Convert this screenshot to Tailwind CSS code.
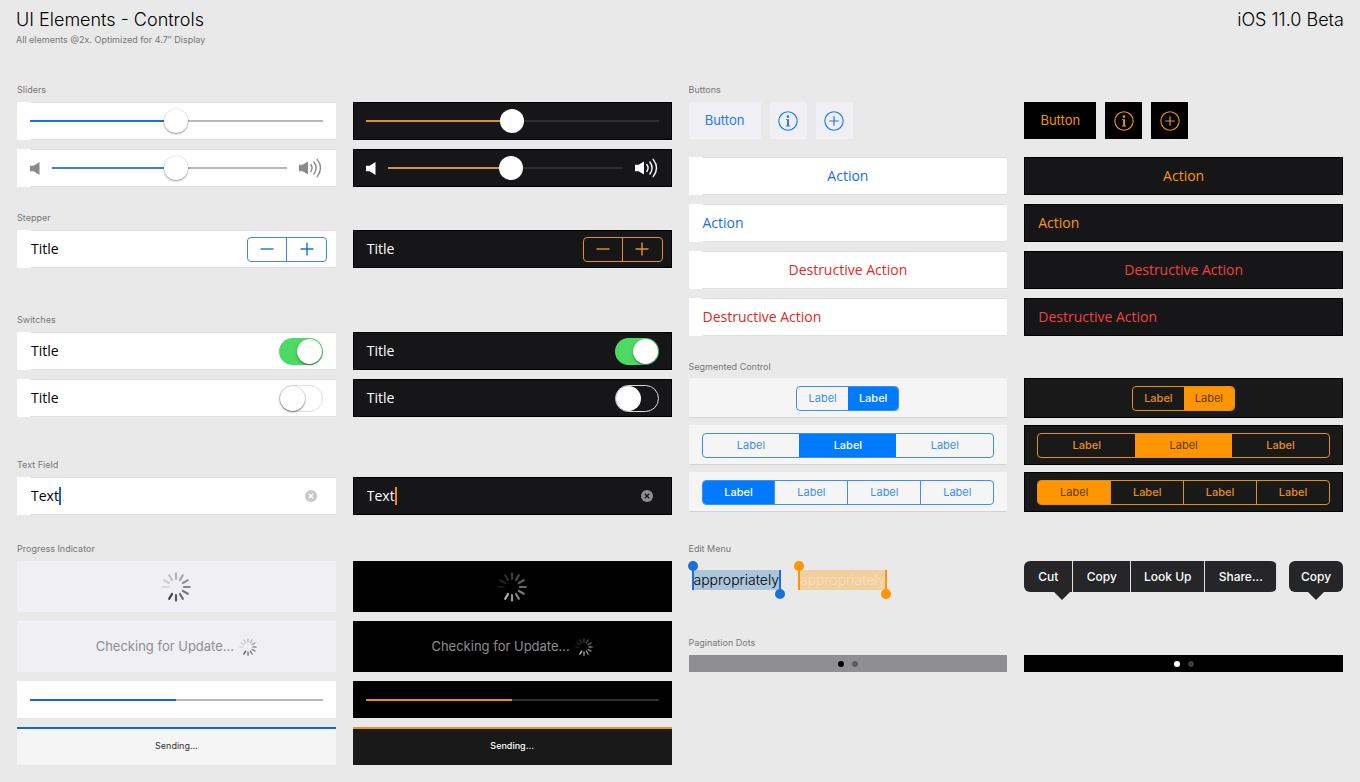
<!DOCTYPE html>
<html lang="en">
	<head>
		<meta charset="UTF-8" />
		<meta name="viewport" content="width=device-width, initial-scale=1.0" />
		<title>UI Elements - Controls</title>
		<script src="https://cdn.jsdelivr.net/npm/@tailwindcss/browser@4"></script>
	</head>
	<body class="bg-[#e9e9e9] text-black font-['Inter',sans-serif] min-h-screen">
		<!-- shared icons -->
		<svg class="hidden">
			<symbol id="speaker" viewBox="0 0 10 13">
				<path d="M0 3.7h3.6L9.5 0v13L3.6 9.3H0z" fill="currentColor" />
			</symbol>
			<symbol id="speaker-loud" viewBox="0 0 24 20">
				<path d="M0 6.7h3.6L9 3.5v13l-5.4-3.2H0z" fill="currentColor" />
				<g fill="none" stroke="currentColor" stroke-width="1.4" stroke-linecap="round">
					<path d="M11.8 6.5q2.6 3.5 0 7" />
					<path d="M14.9 4q4.4 6 0 12" />
					<path d="M18.2 1.4q6.6 8.6 0 17.2" />
				</g>
			</symbol>
			<symbol id="minus" viewBox="0 0 14 14">
				<path d="M.5 7h13" stroke="currentColor" stroke-width="1.4" />
			</symbol>
			<symbol id="plus" viewBox="0 0 14 14">
				<path d="M.5 7h13M7 .5v13" stroke="currentColor" stroke-width="1.4" />
			</symbol>
			<symbol id="info" viewBox="0 0 20 20">
				<circle cx="10" cy="10" r="9.2" fill="none" stroke="currentColor" stroke-width="1.1" />
				<circle cx="9.9" cy="5.6" r="1.3" fill="currentColor" />
				<path d="M8 8.2h3v6.4h1.2v.8H7.9v-.8h1.2V9H8z" fill="currentColor" />
			</symbol>
			<symbol id="add" viewBox="0 0 20 20">
				<circle cx="10" cy="10" r="9.2" fill="none" stroke="currentColor" stroke-width="1.1" />
				<path d="M5.2 10h9.6M10 5.2v9.6" stroke="currentColor" stroke-width="1.2" />
			</symbol>
			<symbol id="clear" viewBox="0 0 12 12">
				<circle cx="6" cy="6" r="6" fill="currentColor" />
				<path d="M3.8 3.8l4.4 4.4M8.2 3.8L3.8 8.2" stroke="var(--cross)" stroke-width="1.3" />
			</symbol>
			<symbol id="spinner" viewBox="-15 -15 30 30">
				<g stroke="currentColor" stroke-width="2.2" stroke-linecap="round">
					<path d="M0-8v-5.6" opacity=".32" />
					<path d="M0-8v-5.6" opacity=".4" transform="rotate(30)" />
					<path d="M0-8v-5.6" opacity=".5" transform="rotate(60)" />
					<path d="M0-8v-5.6" opacity=".6" transform="rotate(90)" />
					<path d="M0-8v-5.6" opacity=".66" transform="rotate(120)" />
					<path d="M0-8v-5.6" opacity=".74" transform="rotate(150)" />
					<path d="M0-8v-5.6" opacity=".84" transform="rotate(180)" />
					<path d="M0-8v-5.6" transform="rotate(210)" />
					<path d="M0-8v-5.6" opacity=".12" transform="rotate(270)" />
					<path d="M0-8v-5.6" opacity=".18" transform="rotate(300)" />
					<path d="M0-8v-5.6" opacity=".25" transform="rotate(330)" />
				</g>
			</symbol>
			<symbol id="arrow" viewBox="0 0 16 8">
				<path d="M0 0h16L8 8z" fill="currentColor" />
			</symbol>
		</svg>

		<header class="px-4 pt-2 flex justify-between font-light text-lg leading-6">
			<div>
				<h1>UI Elements - Controls</h1>
				<p class="mt-[2px] text-[9px] leading-3 font-normal text-[#777777]">All elements @2x. Optimized for 4.7″ Display</p>
			</div>
			<p>iOS 11.0 Beta</p>
		</header>

		<main class="mt-[38px] px-[17px] pb-4 grid grid-cols-2 gap-[17px]">
			<div>
				<!-- Sliders -->
				<section>
					<h2 class="h-[18px] text-[9px] leading-3 text-[#777777]">Sliders</h2>
					<div class="grid grid-cols-2 gap-x-[17px] gap-y-[9px]">
						<div class="h-[38px] bg-white pl-[13px]">
							<div class="h-full flex items-center pr-[13px] border-y border-[#e0e0e3]">
								<input type="range" value="50" aria-label="Slider" class="w-full h-[2px] appearance-none bg-linear-to-r from-[#1472dd] from-50% to-[#b7b7b7] to-50% [&::-webkit-slider-thumb]:appearance-none [&::-webkit-slider-thumb]:size-6 [&::-webkit-slider-thumb]:rounded-full [&::-webkit-slider-thumb]:bg-white [&::-webkit-slider-thumb]:shadow-[0_1px_2px_#00000066,0_0_1px_#00000040]" />
							</div>
						</div>
						<div class="h-[38px] bg-[#161618] border border-black px-3 flex items-center">
							<input type="range" value="50" aria-label="Slider" class="w-full h-[2px] appearance-none bg-linear-to-r from-[#e58e1c] from-50% to-[#2e2e30] to-50% [&::-webkit-slider-thumb]:appearance-none [&::-webkit-slider-thumb]:size-6 [&::-webkit-slider-thumb]:rounded-full [&::-webkit-slider-thumb]:bg-white" />
						</div>
						<div class="h-[38px] bg-white pl-[13px]">
							<div class="h-full flex items-center gap-3 pr-[13px] border-y border-[#e0e0e3] text-[#8a8a8e]">
								<svg class="w-[10px] h-[13px] shrink-0"><use href="#speaker" /></svg>
								<input type="range" value="53" aria-label="Volume" class="min-w-0 flex-1 h-[2px] appearance-none bg-linear-to-r from-[#3d83d0] from-53% to-[#b7b7b7] to-53% [&::-webkit-slider-thumb]:appearance-none [&::-webkit-slider-thumb]:size-6 [&::-webkit-slider-thumb]:rounded-full [&::-webkit-slider-thumb]:bg-white [&::-webkit-slider-thumb]:shadow-[0_1px_2px_#00000066,0_0_1px_#00000040]" />
								<svg class="w-6 h-5 shrink-0"><use href="#speaker-loud" /></svg>
							</div>
						</div>
						<div class="h-[38px] bg-[#161618] border border-black px-3 flex items-center gap-3 text-white">
							<svg class="w-[10px] h-[13px] shrink-0"><use href="#speaker" /></svg>
							<input type="range" value="53" aria-label="Volume" class="min-w-0 flex-1 h-[2px] appearance-none bg-linear-to-r from-[#dc9238] from-53% to-[#2e2e30] to-53% [&::-webkit-slider-thumb]:appearance-none [&::-webkit-slider-thumb]:size-6 [&::-webkit-slider-thumb]:rounded-full [&::-webkit-slider-thumb]:bg-white" />
							<svg class="w-6 h-5 shrink-0"><use href="#speaker-loud" /></svg>
						</div>
					</div>
				</section>

				<!-- Stepper -->
				<section class="mt-[25px]">
					<h2 class="h-[18px] text-[9px] leading-3 text-[#777777]">Stepper</h2>
					<div class="grid grid-cols-2 gap-x-[17px]">
						<div class="h-[38px] bg-white pl-[13px]">
							<div class="h-full flex items-center justify-between pl-px pr-[9px] border-y border-[#e0e0e3]">
								<span class="font-['Open_Sans',sans-serif] text-sm">Title</span>
								<div class="w-20 h-[25px] flex rounded-sm border border-[#3f88dd] divide-x divide-[#3f88dd] text-[#1472dd]">
									<button aria-label="Decrease" class="flex-1 flex items-center justify-center"><svg class="size-[14px]"><use href="#minus" /></svg></button>
									<button aria-label="Increase" class="flex-1 flex items-center justify-center"><svg class="size-[14px]"><use href="#plus" /></svg></button>
								</div>
							</div>
						</div>
						<div class="h-[38px] bg-[#161618] border border-black pl-[13px] pr-2 flex items-center justify-between">
							<span class="font-['Open_Sans',sans-serif] text-sm text-white">Title</span>
							<div class="w-20 h-[25px] flex rounded-sm border border-[#e58e1c] divide-x divide-[#e58e1c] text-[#ee9219]">
								<button aria-label="Decrease" class="flex-1 flex items-center justify-center"><svg class="size-[14px]"><use href="#minus" /></svg></button>
								<button aria-label="Increase" class="flex-1 flex items-center justify-center"><svg class="size-[14px]"><use href="#plus" /></svg></button>
							</div>
						</div>
					</div>
				</section>

				<!-- Switches -->
				<section class="mt-[46px]">
					<h2 class="h-[18px] text-[9px] leading-3 text-[#777777]">Switches</h2>
					<div class="grid grid-cols-2 gap-x-[17px] gap-y-[9px]">
						<div class="h-[38px] bg-white pl-[13px]">
							<label class="h-full flex items-center justify-between pl-px pr-[13px] border-y border-[#e0e0e3] font-['Open_Sans',sans-serif] text-sm">
								Title
								<input type="checkbox" checked class="appearance-none w-11 h-[27px] p-px rounded-full flex justify-end bg-[#4cd964] before:size-[25px] before:rounded-full before:bg-white before:shadow-[0_1px_2px_#00000080]" />
							</label>
						</div>
						<div class="h-[38px] bg-[#161618] border border-black pl-[13px] pr-3">
							<label class="h-full flex items-center justify-between font-['Open_Sans',sans-serif] text-sm text-white">
								Title
								<input type="checkbox" checked class="appearance-none w-11 h-[27px] p-px rounded-full flex justify-end bg-[#4cd964] before:size-[25px] before:rounded-full before:bg-white before:shadow-[0_1px_2px_#00000080]" />
							</label>
						</div>
						<div class="h-[38px] bg-white pl-[13px]">
							<label class="h-full flex items-center justify-between pl-px pr-[13px] border-y border-[#e0e0e3] font-['Open_Sans',sans-serif] text-sm">
								Title
								<input type="checkbox" class="appearance-none w-11 h-[27px] rounded-full flex border border-[#dddddd] before:size-[25px] before:rounded-full before:bg-white before:shadow-[0_1px_2px_#00000080,0_0_1px_#00000040]" />
							</label>
						</div>
						<div class="h-[38px] bg-[#161618] border border-black pl-[13px] pr-3">
							<label class="h-full flex items-center justify-between font-['Open_Sans',sans-serif] text-sm text-white">
								Title
								<input type="checkbox" class="appearance-none w-11 h-[27px] rounded-full flex border border-[#dddddd] before:size-[25px] before:rounded-full before:bg-white" />
							</label>
						</div>
					</div>
				</section>

				<!-- Text field -->
				<section class="mt-[42px]">
					<h2 class="h-[18px] text-[9px] leading-3 text-[#777777]">Text Field</h2>
					<div class="grid grid-cols-2 gap-x-[17px]">
						<div class="h-[38px] bg-white pl-[13px]">
							<div class="h-full flex items-center pl-px pr-[19px] border-y border-[#e0e0e3]">
								<input type="text" value="Text" aria-label="Text" class="field-sizing-content font-['Open_Sans',sans-serif] text-sm" />
								<span class="w-[2px] h-[18px] bg-[#1a5fd0]"></span>
								<button aria-label="Clear" class="ml-auto text-[#c7c7cc] [--cross:white]"><svg class="size-3"><use href="#clear" /></svg></button>
							</div>
						</div>
						<div class="h-[38px] bg-[#161618] border border-black pl-[13px] pr-[18px] flex items-center">
							<input type="text" value="Text" aria-label="Text" class="field-sizing-content font-['Open_Sans',sans-serif] text-sm text-white" />
							<span class="w-[2px] h-[18px] bg-[#f08c0c]"></span>
							<button aria-label="Clear" class="ml-auto text-[#8e8e93] [--cross:#161618]"><svg class="size-3"><use href="#clear" /></svg></button>
						</div>
					</div>
				</section>

				<!-- Progress -->
				<section class="mt-7">
					<h2 class="h-[18px] text-[9px] leading-3 text-[#777777]">Progress Indicator</h2>
					<div class="grid grid-cols-2 gap-x-[17px] gap-y-[9px]">
						<div class="h-[51px] bg-[#efeff4] flex items-center justify-center text-[#3c3c4c]">
							<svg class="size-[30px]"><use href="#spinner" /></svg>
						</div>
						<div class="h-[51px] bg-black flex items-center justify-center text-[#b4b4b4]">
							<svg class="size-[30px]"><use href="#spinner" /></svg>
						</div>
						<div class="h-[51px] bg-[#efeff4] flex items-center justify-center gap-[5px] text-[13px] text-[#8e8e93]">
							Checking for Update...
							<svg class="size-[18px] text-[#55555c]"><use href="#spinner" /></svg>
						</div>
						<div class="h-[51px] bg-black flex items-center justify-center gap-[5px] text-[13px] text-[#8e8e93]">
							Checking for Update...
							<svg class="size-[18px] text-[#c4c4c4]"><use href="#spinner" /></svg>
						</div>
						<div class="h-[37px] bg-white px-[13px] flex items-center">
							<progress value="50" max="100" aria-label="Progress" class="w-full h-[2px] appearance-none [&::-webkit-progress-bar]:bg-[#b7b7b7] [&::-webkit-progress-value]:bg-[#1566d0]"></progress>
						</div>
						<div class="h-[37px] bg-black px-[13px] flex items-center">
							<progress value="50" max="100" aria-label="Progress" class="w-full h-[2px] appearance-none [&::-webkit-progress-bar]:bg-[#2e2e30] [&::-webkit-progress-value]:bg-[#e58e1c]"></progress>
						</div>
						<div class="h-[38px] bg-[#f5f5f5] border-t-2 border-[#1566d0] pb-[2px] flex items-center justify-center text-[9px] text-[#333333]">Sending...</div>
						<div class="h-[38px] bg-[#191919] border-t-2 border-[#ee921c] pb-[2px] flex items-center justify-center text-[9px] font-medium text-white">Sending...</div>
					</div>
				</section>
			</div>

			<div>
				<!-- Buttons -->
				<section>
					<h2 class="h-[18px] text-[9px] leading-3 text-[#777777]">Buttons</h2>
					<div class="grid grid-cols-2 gap-x-[17px]">
						<div class="flex gap-[9px] text-[#1f7ce2] text-[13px]">
							<button class="w-[72px] h-[37px] pt-px bg-[#efeff4]">Button</button>
							<button aria-label="Info" class="size-[37px] bg-[#efeff4] flex items-center justify-center"><svg class="size-5"><use href="#info" /></svg></button>
							<button aria-label="Add" class="size-[37px] bg-[#efeff4] flex items-center justify-center"><svg class="size-5"><use href="#add" /></svg></button>
						</div>
						<div class="flex gap-[9px] text-[#ee9219] text-[13px]">
							<button class="w-[72px] h-[37px] pt-px bg-black">Button</button>
							<button aria-label="Info" class="size-[37px] bg-black flex items-center justify-center"><svg class="size-5"><use href="#info" /></svg></button>
							<button aria-label="Add" class="size-[37px] bg-black flex items-center justify-center"><svg class="size-5"><use href="#add" /></svg></button>
						</div>
					</div>
					<div class="mt-[18px] grid grid-cols-2 gap-x-[17px] gap-y-[9px] font-['Open_Sans',sans-serif] text-sm">
						<div class="h-[38px] bg-white pl-[13px]">
							<button class="w-full h-full pr-[13px] border-y border-[#e0e0e3] text-[#1472dd]">Action</button>
						</div>
						<button class="h-[38px] bg-[#161618] border border-black text-[#fb960f]">Action</button>
						<div class="h-[38px] bg-white pl-[13px]">
							<button class="w-full h-full pl-px text-left border-y border-[#e0e0e3] text-[#1472dd]">Action</button>
						</div>
						<button class="h-[38px] bg-[#161618] border border-black pl-[13px] text-left text-[#fb960f]">Action</button>
						<div class="h-[38px] bg-white pl-[13px]">
							<button class="w-full h-full pr-[13px] border-y border-[#e0e0e3] text-[#dd2a24]">Destructive Action</button>
						</div>
						<button class="h-[38px] bg-[#161618] border border-black text-[#f2413a]">Destructive Action</button>
						<div class="h-[38px] bg-white pl-[13px]">
							<button class="w-full h-full pl-px text-left border-y border-[#e0e0e3] text-[#dd2a24]">Destructive Action</button>
						</div>
						<button class="h-[38px] bg-[#161618] border border-black pl-[13px] text-left text-[#f2413a]">Destructive Action</button>
					</div>
				</section>

				<!-- Segmented control -->
				<section class="mt-[25px]">
					<h2 class="h-[17px] text-[9px] leading-3 text-[#777777]">Segmented Control</h2>
					<div class="grid grid-cols-2 gap-x-[17px] gap-y-[7px] text-[11px]">
						<div class="h-10 bg-[#f5f5f5] border-b border-[#d4d4d4] pt-px px-[13px] flex items-center justify-center">
							<div class="w-[103px] h-[25px] flex rounded-sm overflow-hidden border border-[#3f8fe8] text-[#3f8fe8]">
								<button class="flex-1">Label</button>
								<button aria-pressed="true" class="flex-1 bg-[#007aff] text-white font-medium">Label</button>
							</div>
						</div>
						<div class="h-10 bg-[#191919] border border-black px-3 flex items-center justify-center">
							<div class="w-[103px] h-[25px] flex rounded-sm overflow-hidden border border-[#e58e1c] text-[#e58e1c]">
								<button class="flex-1 font-medium">Label</button>
								<button aria-pressed="true" class="flex-1 bg-[#ff9500] text-[#5c3a08]">Label</button>
							</div>
						</div>
						<div class="h-10 bg-[#f5f5f5] border-b border-[#d4d4d4] pt-px px-[13px] flex items-center">
							<div class="w-full h-[25px] flex rounded-sm overflow-hidden border border-[#3f8fe8] text-[#3f8fe8]">
								<button class="flex-1">Label</button>
								<button aria-pressed="true" class="flex-1 bg-[#007aff] text-white font-medium">Label</button>
								<button class="flex-1">Label</button>
							</div>
						</div>
						<div class="h-10 bg-[#191919] border border-black px-3 flex items-center">
							<div class="w-full h-[25px] flex rounded-sm overflow-hidden border border-[#e58e1c] text-[#e58e1c]">
								<button class="flex-1 font-medium">Label</button>
								<button aria-pressed="true" class="flex-1 bg-[#ff9500] text-[#5c3a08]">Label</button>
								<button class="flex-1 font-medium">Label</button>
							</div>
						</div>
						<div class="h-10 bg-[#f5f5f5] border-b border-[#d4d4d4] pt-px px-[13px] flex items-center">
							<div class="w-full h-[25px] flex rounded-sm overflow-hidden border border-[#3f8fe8] divide-x divide-[#3f8fe8] text-[#3f8fe8]">
								<button aria-pressed="true" class="flex-1 bg-[#007aff] text-white font-medium">Label</button>
								<button class="flex-1">Label</button>
								<button class="flex-1">Label</button>
								<button class="flex-1">Label</button>
							</div>
						</div>
						<div class="h-10 bg-[#191919] border border-black px-3 flex items-center">
							<div class="w-full h-[25px] flex rounded-sm overflow-hidden border border-[#e58e1c] divide-x divide-[#e58e1c] text-[#e58e1c]">
								<button aria-pressed="true" class="flex-1 bg-[#ff9500] text-[#5c3a08]">Label</button>
								<button class="flex-1 font-medium">Label</button>
								<button class="flex-1 font-medium">Label</button>
								<button class="flex-1 font-medium">Label</button>
							</div>
						</div>
					</div>
				</section>

				<!-- Edit menu -->
				<section class="mt-[31px]">
					<h2 class="h-[18px] text-[9px] leading-3 text-[#777777]">Edit Menu</h2>
					<div class="grid grid-cols-2 gap-x-[17px]">
						<div class="pt-[9px] pl-[3px] flex items-start gap-[17px] font-light text-sm leading-5">
							<span class="relative border-x-2 border-[#1a6fd8] bg-[#abc5da]">
								appropriately
								<i class="absolute -left-[6px] -top-[9px] size-[10px] rounded-full bg-[#1a6fd8]"></i>
								<i class="absolute -right-[6px] -bottom-[9px] size-[10px] rounded-full bg-[#1a6fd8]"></i>
							</span>
							<span class="relative border-x-2 border-[#ff9500] bg-[#f1cf9f] text-[#f8e0be]">
								appropriately
								<i class="absolute -left-[6px] -top-[9px] size-[10px] rounded-full bg-[#ff9500]"></i>
								<i class="absolute -right-[6px] -bottom-[9px] size-[10px] rounded-full bg-[#ff9500]"></i>
							</span>
						</div>
						<div class="flex justify-between text-xs font-medium text-white">
							<div class="relative h-[31px] flex rounded-md bg-[#262628] divide-x divide-[#e0e0e0]">
								<button class="w-[49px]">Cut</button>
								<button class="w-[58px]">Copy</button>
								<button class="w-[74px]">Look Up</button>
								<button class="w-[72px]">Share...</button>
								<svg class="absolute left-[30px] top-full w-4 h-2 text-[#262628]"><use href="#arrow" /></svg>
							</div>
							<div class="relative h-[31px] flex rounded-md bg-[#262628]">
								<button class="w-[54px]">Copy</button>
								<svg class="absolute left-[19px] top-full w-4 h-2 text-[#262628]"><use href="#arrow" /></svg>
							</div>
						</div>
					</div>
				</section>

				<!-- Pagination -->
				<section class="mt-[45px]">
					<h2 class="h-[18px] text-[9px] leading-3 text-[#777777]">Pagination Dots</h2>
					<div class="grid grid-cols-2 gap-x-[17px]">
						<div class="h-[17px] bg-[#8e8e93] flex items-center justify-center gap-2">
							<button aria-label="Page 1" class="size-[6px] rounded-full bg-black"></button>
							<button aria-label="Page 2" class="size-[6px] rounded-full bg-[#5c5c60]"></button>
						</div>
						<div class="h-[17px] bg-black flex items-center justify-center gap-2">
							<button aria-label="Page 1" class="size-[6px] rounded-full bg-white"></button>
							<button aria-label="Page 2" class="size-[6px] rounded-full bg-[#3c3c3c]"></button>
						</div>
					</div>
				</section>
			</div>
		</main>
	</body>
</html>
